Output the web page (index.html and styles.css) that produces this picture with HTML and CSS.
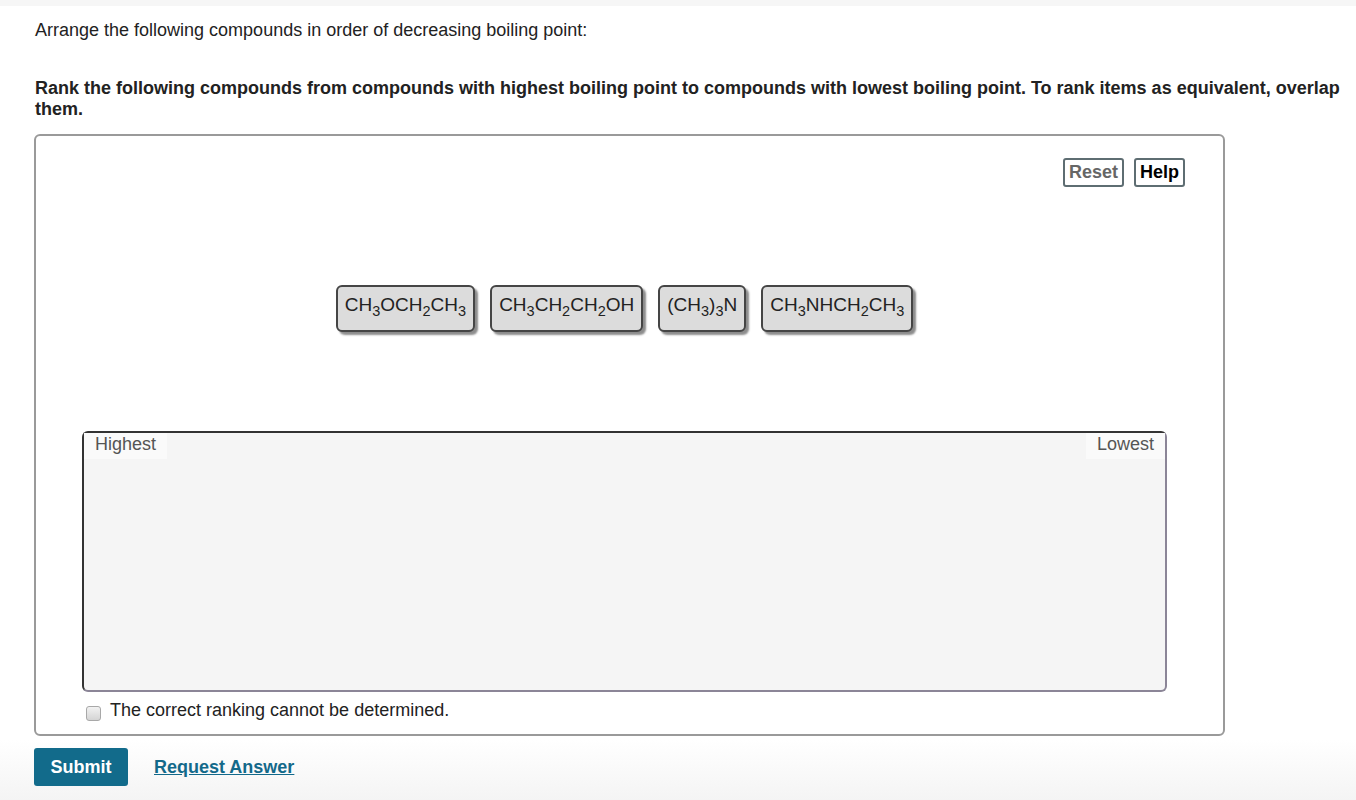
FILE: index.html
```html
<!DOCTYPE html>
<html lang="en">
<head>
  <meta charset="UTF-8" />
  <meta name="viewport" content="width=device-width, initial-scale=1.0" />
  <title>Ranking</title>
  <link rel="stylesheet" href="styles.css">
</head>
<body>
  <div id="topStrip"></div>
  <div id="page">
    <p class="intro">Arrange the following compounds in order of decreasing boiling point:</p>
    <p class="instructions">Rank the following compounds from compounds with highest boiling point to compounds with lowest boiling point. To rank items as equivalent, overlap them.</p>

    <div id="rankBox">
      <div class="tool-buttons">
        <button class="tool-button reset">Reset</button>
        <button class="tool-button help">Help</button>
      </div>

      <div id="chipRow">
        <div class="chip">CH<sub>3</sub>OCH<sub>2</sub>CH<sub>3</sub></div>
        <div class="chip">CH<sub>3</sub>CH<sub>2</sub>CH<sub>2</sub>OH</div>
        <div class="chip">(CH<sub>3</sub>)<sub>3</sub>N</div>
        <div class="chip">CH<sub>3</sub>NHCH<sub>2</sub>CH<sub>3</sub></div>
      </div>

      <div id="dropZone">
        <span class="zone-label">Highest</span>
        <span class="zone-label">Lowest</span>
      </div>

      <label class="cannot">
        <input type="checkbox" class="cannot-box">
        <span>The correct ranking cannot be determined.</span>
      </label>
    </div>

    <div id="actions">
      <button class="submit">Submit</button>
      <a href="#" class="request">Request Answer</a>
    </div>
  </div>
</body>
</html>
```

FILE: styles.css
```css
html, body {
  height: 100%;
}

body {
  margin: 0;
  font-family: "Liberation Sans", Arial, sans-serif;
  color: #222;
  background: linear-gradient(to bottom, #fff 0, #fff 740px, #f4f4f4 800px);
  overflow: hidden;
}

#topStrip {
  height: 6px;
  background-color: #f6f6f6;
}

#page {
  padding: 0 0 0 35px;
}

.intro {
  margin: 14px 0 0 0;
  font-size: 18px;
  line-height: 21px;
}

.instructions {
  margin: 37px 0 0 0;
  font-size: 18px;
  line-height: 21px;
  font-weight: bold;
}

#rankBox {
  margin: 14px 0 0 -1px;
  width: 1187px;
  height: 598px;
  border: 2px solid #9a9a9a;
  border-radius: 6px;
  display: flex;
  flex-direction: column;
  position: relative;
}

.tool-buttons {
  display: flex;
  justify-content: flex-end;
  gap: 10px;
  margin: 22px 38px 0 0;
}

.tool-button {
  font-family: "Liberation Sans", Arial, sans-serif;
  font-weight: bold;
  font-size: 18px;
  background: #fff;
  border: 2px solid #5e6d72;
  border-radius: 3px;
  padding: 0 4px;
  height: 29px;
}

.reset {
  color: #666;
}

.help {
  color: #000;
}

#chipRow {
  display: flex;
  justify-content: center;
  gap: 15px;
  margin: 98px 0 0 -10px;
}

.chip {
  background-color: #dcdcdc;
  border: 2px solid #454545;
  border-radius: 6px;
  box-shadow: 3px 3px 2px rgba(0,0,0,0.45);
  padding: 0 7px;
  height: 43px;
  line-height: 36px;
  font-size: 19px;
  color: #222;
  white-space: nowrap;
}

.chip sub {
  font-size: 14.5px;
  vertical-align: -5px;
  line-height: 0;
}

#dropZone {
  margin: 99px 0 0 46px;
  width: 1081px;
  height: 257px;
  background-color: #f5f5f5;
  border: 2px solid #333;
  border-right-color: #8b8597;
  border-bottom-color: #8b8597;
  border-radius: 6px;
  display: flex;
  justify-content: space-between;
  align-items: flex-start;
}

.zone-label {
  background-color: #fafafa;
  color: #555;
  font-size: 18px;
  line-height: 22px;
  padding: 0 11px 4px 11px;
}

.cannot {
  display: flex;
  align-items: center;
  gap: 9px;
  margin: 8px 0 0 50px;
  font-size: 18px;
}

.cannot-box {
  appearance: none;
  margin: 6px 0 0 0;
  width: 15px;
  height: 15px;
  border: 1px solid #a8a8a8;
  border-radius: 3px;
  background: linear-gradient(to bottom, #f2f2f2, #d4d4d4);
}

#actions {
  display: flex;
  align-items: center;
  gap: 26px;
  margin: 12px 0 0 -1px;
}

.submit {
  background-color: #126b8b;
  color: #fff;
  border: none;
  border-radius: 3px;
  font-family: "Liberation Sans", Arial, sans-serif;
  font-weight: bold;
  font-size: 18px;
  width: 94px;
  height: 38px;
}

.request {
  color: #13698a;
  font-weight: bold;
  font-size: 18px;
  text-decoration: underline;
}
```
